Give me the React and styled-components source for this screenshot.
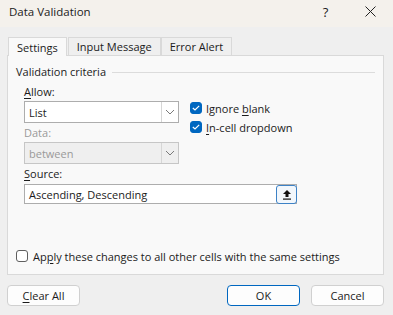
import React from 'react';
import styled, { createGlobalStyle } from 'styled-components';

const Global = createGlobalStyle`
  html, body { margin: 0; padding: 0; }
  body { background: #eeeeee; font-family: "Open Sans", "Noto Sans", sans-serif; font-size: 11px; color: #1b1b1b; }
`;

const Window = styled.div`
  width: 393px;
  height: 315px;
  background: #efefef;
  display: flex;
  flex-direction: column;
  overflow: hidden;
`;

const TitleBar = styled.div`
  height: 27px;
  background: #f4f1ec;
  display: flex;
  align-items: center;
  padding-left: 9px;
  font-size: 11.5px;
`;

const Title = styled.div`
  flex: 1;
  margin-top: -4px;
`;

const TitleButton = styled.div`
  width: 45px;
  display: flex;
  justify-content: center;
  margin-top: -4px;
  font-size: 13px;
`;

const Body = styled.div`
  flex: 1;
  display: flex;
  flex-direction: column;
  padding: 9px 9px 0 7px;
`;

const TabRow = styled.div`
  display: flex;
  height: 19px;
  align-items: flex-end;
`;

const Tab = styled.div`
  height: ${p => (p.$active ? '19px' : '18px')};
  padding: 0 8px;
  display: flex;
  align-items: center;
  background: ${p => (p.$active ? '#f9f9f9' : '#efefef')};
  border: 1px solid #d9d9d9;
  border-bottom: none;
  margin-left: ${p => (p.$active ? '1px' : '0')};
  margin-right: ${p => (p.$active ? '1px' : '0')};
  margin-bottom: ${p => (p.$active ? '-1px' : '0')};
  position: relative;
  z-index: ${p => (p.$active ? 1 : 0)};
  box-sizing: border-box;
`;

const Panel = styled.div`
  height: 220px;
  background: #f9f9f9;
  border: 1px solid #d9d9d9;
  box-sizing: border-box;
  display: flex;
  flex-direction: column;
  padding: 8px 8px 0 8px;
`;

const GroupHead = styled.div`
  display: flex;
  align-items: center;
  gap: 6px;
  height: 16px;
  line-height: 16px;
  &::after {
    content: '';
    flex: 1;
    height: 1px;
    background: #dcdcdc;
  }
`;

const Criteria = styled.div`
  display: flex;
  gap: 11px;
  padding-left: 8px;
  margin-top: 5px;
`;

const Column = styled.div`
  display: flex;
  flex-direction: column;
  padding-left: ${p => p.$indent || 0}px;
`;

const Label = styled.div`
  color: ${p => (p.$disabled ? '#9a9a9a' : '#1b1b1b')};
  height: 14px;
  line-height: 14px;
  margin-top: ${p => p.$top || 0}px;
`;

const U = styled.span`
  text-decoration: underline;
  text-underline-offset: 2px;
`;

const Select = styled.div`
  width: 155px;
  height: 22px;
  margin-top: 2px;
  box-sizing: border-box;
  border: 1px solid ${p => (p.$disabled ? '#c6c6c6' : '#adadad')};
  background: ${p => (p.$disabled ? '#efefef' : '#ffffff')};
  color: ${p => (p.$disabled ? '#9a9a9a' : '#1b1b1b')};
  display: flex;
  align-items: center;
`;

const SelectText = styled.div`
  flex: 1;
  padding-left: 4px;
`;

const Arrow = styled.div`
  width: 16px;
  height: 100%;
  border-left: 1px solid #d6d6d6;
  display: flex;
  align-items: center;
  justify-content: center;
  background: ${p => (p.$disabled ? '#efefef' : '#ffffff')};
`;

const Checks = styled.div`
  display: flex;
  flex-direction: column;
  gap: 7px;
  margin-top: 17px;
`;

const CheckRow = styled.div`
  display: flex;
  align-items: center;
  gap: 4px;
  height: 12px;
`;

const Box = styled.div`
  width: 12px;
  height: 12px;
  box-sizing: border-box;
  border-radius: 3px;
  background: ${p => (p.$checked ? '#0067c0' : '#ffffff')};
  border: 1px solid ${p => (p.$checked ? '#0067c0' : '#5f5f5f')};
  display: flex;
  align-items: center;
  justify-content: center;
`;

const SourceRow = styled.div`
  width: 273px;
  height: 20px;
  margin-top: 3px;
  box-sizing: border-box;
  border: 1px solid #adadad;
  background: #ffffff;
  display: flex;
  align-items: center;
  padding-left: 4px;
`;

const SourceText = styled.div`
  flex: 1;
`;

const RefButton = styled.div`
  width: 21px;
  height: 19px;
  box-sizing: border-box;
  border: 1px solid #3d82c6;
  border-radius: 3px;
  background: #f2f7fc;
  display: flex;
  align-items: center;
  justify-content: center;
  margin-right: -1px;
`;

const ApplyRow = styled(CheckRow)`
  margin-top: auto;
  margin-bottom: 12px;
  gap: 5px;
`;

const Footer = styled.div`
  display: flex;
  align-items: center;
  height: 40px;
  gap: 11px;
`;

const Button = styled.div`
  width: 73px;
  height: 21px;
  box-sizing: border-box;
  border: 1px solid ${p => (p.$primary ? '#0067c0' : '#d0d0d0')};
  border-radius: 4px;
  background: #fdfdfd;
  display: flex;
  align-items: center;
  justify-content: center;
  margin-left: ${p => (p.$push ? 'auto' : '0')};
`;

const Chevron = () => (
  <svg width="10" height="6" viewBox="0 0 10 6">
    <path d="M1 1 L5 5 L9 1" fill="none" stroke="#7a7a7a" strokeWidth="1" />
  </svg>
);

const Tick = () => (
  <svg width="8" height="6" viewBox="0 0 8 6">
    <path d="M0.8 3 L3 5 L7.2 0.8" fill="none" stroke="#ffffff" strokeWidth="1.2" />
  </svg>
);

const Check = ({ checked, children }) => (
  <CheckRow>
    <Box $checked={checked}>{checked && <Tick />}</Box>
    <span>{children}</span>
  </CheckRow>
);

export default function App() {
  return (
    <Window>
      <Global />
      <TitleBar>
        <Title>Data Validation</Title>
        <TitleButton>?</TitleButton>
        <TitleButton>
          <svg width="11" height="11" viewBox="0 0 11 11">
            <path d="M0.5 0.5 L10.5 10.5 M10.5 0.5 L0.5 10.5" stroke="#222" strokeWidth="1" />
          </svg>
        </TitleButton>
      </TitleBar>
      <Body>
        <TabRow>
          <Tab $active>Settings</Tab>
          <Tab>Input Message</Tab>
          <Tab>Error Alert</Tab>
        </TabRow>
        <Panel>
          <GroupHead>Validation criteria</GroupHead>
          <Criteria>
            <Column>
              <Label><U>A</U>llow:</Label>
              <Select>
                <SelectText>List</SelectText>
                <Arrow><Chevron /></Arrow>
              </Select>
              <Label $disabled $top={3}>Data:</Label>
              <Select $disabled>
                <SelectText>between</SelectText>
                <Arrow $disabled><Chevron /></Arrow>
              </Select>
            </Column>
            <Checks>
              <Check checked>Ignore <U>b</U>lank</Check>
              <Check checked><U>I</U>n-cell dropdown</Check>
            </Checks>
          </Criteria>
          <Column $indent={8}>
            <Label $top={3}><U>S</U>ource:</Label>
            <SourceRow>
              <SourceText>Ascending, Descending</SourceText>
              <RefButton>
                <svg width="10" height="11" viewBox="0 0 10 11">
                  <path d="M5 1 L9 5 H6.5 V8 H3.5 V5 H1 Z" fill="#111" />
                  <rect x="1" y="9.5" width="8" height="1.2" fill="#111" />
                </svg>
              </RefButton>
            </SourceRow>
          </Column>
          <ApplyRow>
            <Box />
            <span>Ap<U>p</U>ly these changes to all other cells with the same settings</span>
          </ApplyRow>
        </Panel>
        <Footer>
          <Button><U>C</U>lear All</Button>
          <Button $primary $push>OK</Button>
          <Button>Cancel</Button>
        </Footer>
      </Body>
    </Window>
  );
}
